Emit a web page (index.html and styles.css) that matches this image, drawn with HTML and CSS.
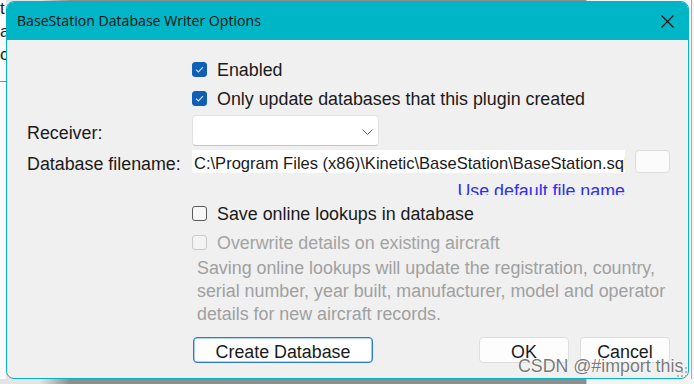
FILE: index.html
```html
<!DOCTYPE html>
<html>
<head>
<meta charset="utf-8">
<title>BaseStation Database Writer Options</title>
<link rel="stylesheet" href="styles.css">
</head>
<body>
<div class="desk">
  <div class="bg-left">
    <span class="ch ch-t">t</span>
    <span class="ch ch-a">a</span>
    <span class="ch ch-c">c</span>
    <span class="bg-line"></span>
  </div>
  <div class="dialog">
    <div class="titlebar">
      <span class="title">BaseStation Database Writer Options</span>
      <svg class="close" width="13" height="13" viewBox="0 0 13 13"><path d="M0.5 0.5 L12.5 12.5 M12.5 0.5 L0.5 12.5" stroke="#111" stroke-width="1.1" fill="none"/></svg>
    </div>
    <div class="content">
      <div class="row">
        <span class="label"></span>
        <span class="check"><span class="box checked"><svg width="15" height="15" viewBox="0 0 15 15"><path d="M4 7.6 L6.4 10 L11 5.2" stroke="#d6e6f7" stroke-width="1.2" fill="none"/></svg></span><span class="txt">Enabled</span></span>
      </div>
      <div class="row">
        <span class="label"></span>
        <span class="check"><span class="box checked"><svg width="15" height="15" viewBox="0 0 15 15"><path d="M4 7.6 L6.4 10 L11 5.2" stroke="#d6e6f7" stroke-width="1.2" fill="none"/></svg></span><span class="txt">Only update databases that this plugin created</span></span>
      </div>
      <div class="row row-combo">
        <span class="label label-combo">Receiver:</span>
        <span class="combo"><svg class="chev" width="11" height="6" viewBox="0 0 11 6"><path d="M0.5 0.5 L5.5 5.5 L10.5 0.5" stroke="#606060" stroke-width="1" fill="none"/></svg></span>
      </div>
      <div class="row">
        <span class="label label-field">Database filename:</span>
        <span class="field">C:\Program Files (x86)\Kinetic\BaseStation\BaseStation.sqb</span>
        <span class="browse"></span>
      </div>
      <div class="row row-link">
        <span class="label"></span>
        <span class="linkclip"><span class="link">Use default file name</span></span>
      </div>
      <div class="row">
        <span class="label"></span>
        <span class="check"><span class="box"></span><span class="txt">Save online lookups in database</span></span>
      </div>
      <div class="row">
        <span class="label"></span>
        <span class="check disabled"><span class="box"></span><span class="txt">Overwrite details on existing aircraft</span></span>
      </div>
      <p class="note">Saving online lookups will update the registration, country,<br>serial number, year built, manufacturer, model and operator<br>details for new aircraft records.</p>
      <div class="buttons">
        <span class="btn btn-default">Create Database</span>
        <span class="btn btn-ok">OK</span>
        <span class="btn">Cancel</span>
      </div>
    </div>
    <div class="watermark">CSDN @#import this</div>
    <svg class="grip" width="12" height="12" viewBox="0 0 12 12">
      <rect x="9" y="1" width="2" height="2" fill="#b8b8b8"/>
      <rect x="5" y="5" width="2" height="2" fill="#b8b8b8"/>
      <rect x="9" y="5" width="2" height="2" fill="#b8b8b8"/>
      <rect x="1" y="9" width="2" height="2" fill="#b8b8b8"/>
      <rect x="5" y="9" width="2" height="2" fill="#b8b8b8"/>
      <rect x="9" y="9" width="2" height="2" fill="#b8b8b8"/>
    </svg>
  </div>
  <div class="bg-right"></div>
</div>
</body>
</html>
```

FILE: styles.css
```css
html, body {
  margin: 0;
  padding: 0;
}
body {
  width: 694px;
  height: 384px;
  overflow: hidden;
  background: linear-gradient(to right, #e4e4e4 0, #e4e4e4 40px, #8e8e8e 70px, #8e8e8e 586px, #c4c4c4 586px, #c4c4c4 587px, #f3f3f3 587px);
  font-family: "Liberation Sans", Arial, sans-serif;
  color: #1a1a1a;
}
.desk {
  display: flex;
  align-items: flex-start;
  height: 379px;
}
.bg-left {
  flex: none;
  width: 6px;
  height: 379px;
  background: #fbfbfb;
  overflow: hidden;
  display: flex;
  flex-direction: column;
  font-size: 17px;
  line-height: 20px;
  color: #222;
}
.ch-t { margin-top: -1px; }
.ch-a { margin-top: 3px; }
.ch-c { margin-top: 3px; }
.bg-line {
  display: block;
  margin-top: 16px;
  height: 1px;
  background: #8a8a8a;
}
.bg-right {
  flex: 1;
  height: 379px;
  background: linear-gradient(to right, #f6f6f6 0, #f6f6f6 2px, #a8a8a8 2px, #a8a8a8 3px, #f6f6f6 3px);
}
.dialog {
  flex: none;
  position: relative;
  box-sizing: border-box;
  width: 683px;
  height: 378px;
  margin-top: 1px;
  border: 1px solid #00b4c4;
  border-radius: 8px;
  background: #f0f0f0;
  overflow: hidden;
}
.titlebar {
  height: 38px;
  background: #00b5c5;
  display: flex;
  align-items: center;
  justify-content: space-between;
  padding: 0 14px 0 10px;
}
.title {
  font-family: "Open Sans", "Noto Sans", sans-serif;
  font-size: 14.1px;
  color: #111;
  margin-top: -1px;
}
.close {
  display: block;
}
.content {
  padding: 15px 18px 0 20px;
  font-size: 17.85px;
}
.row {
  display: flex;
  align-items: center;
  height: 29px;
}
.row-combo {
  height: 34px;
}
.row-link {
  height: 23px;
  align-items: flex-start;
}
.label {
  flex: none;
  width: 165px;
  white-space: nowrap;
}
.label-combo {
  padding-top: 6px;
}
.label-field {
  padding-top: 5px;
}
.check {
  display: flex;
  align-items: center;
  white-space: nowrap;
}
.txt {
  padding-top: 2px;
}
.box {
  flex: none;
  box-sizing: border-box;
  width: 15px;
  height: 15px;
  margin-right: 10px;
  border: 1px solid #5a5a5a;
  border-radius: 3px;
  background: #f7f7f7;
}
.box svg {
  display: block;
  margin: -1px;
}
.box.checked {
  background: #0f5fb8;
  border-color: #0f5fb8;
}
.check.disabled {
  color: #a3a3a3;
}
.check.disabled .box {
  border-color: #cacaca;
  background: #f3f3f3;
}
.combo {
  position: relative;
  box-sizing: border-box;
  width: 187px;
  height: 31px;
  background: #fff;
  border: 1px solid #e2e2e2;
  border-bottom-color: #c6c6c6;
  border-radius: 4px;
}
.chev {
  position: absolute;
  right: 5px;
  top: 13px;
}
.field {
  box-sizing: border-box;
  width: 435px;
  height: 23px;
  line-height: 28px;
  padding-left: 2px;
  font-size: 16.55px;
  background: #fff;
  white-space: nowrap;
  overflow: hidden;
}
.browse {
  box-sizing: border-box;
  width: 35px;
  height: 23px;
  margin-left: 10px;
  background: #fbfbfb;
  border: 1px solid #dcdcdc;
  border-radius: 4px;
}
.linkclip {
  box-sizing: border-box;
  width: 435px;
  height: 19px;
  padding: 5px 2px 0 0;
  overflow: hidden;
  text-align: right;
  line-height: 20px;
}
.link {
  color: #2f2ff0;
}
.note {
  margin: 0 0 0 170px;
  line-height: 23px;
  color: #a0a0a0;
  white-space: nowrap;
}
.buttons {
  display: flex;
  margin-top: 11px;
  height: 26px;
}
.btn {
  box-sizing: border-box;
  width: 90px;
  height: 26px;
  line-height: 28px;
  text-align: center;
  background: #fdfdfd;
  border: 1px solid #dedede;
  border-radius: 4px;
}
.btn-default {
  width: 180px;
  margin-left: 166px;
  border-color: #2a7ad0;
  box-shadow: inset 0 0 0 0.6px #6aa6e4;
  background: #fff;
}
.btn-ok {
  margin-left: auto;
  margin-right: 11px;
}
.watermark {
  position: absolute;
  left: 511px;
  top: 354px;
  font-size: 17.8px;
  line-height: 20px;
  color: rgba(95, 95, 95, 0.85);
  text-shadow: 0 0 1px #fff, 0 0 2px #fff;
  white-space: nowrap;
}
.grip {
  position: absolute;
  right: 0;
  bottom: 0;
}
```
